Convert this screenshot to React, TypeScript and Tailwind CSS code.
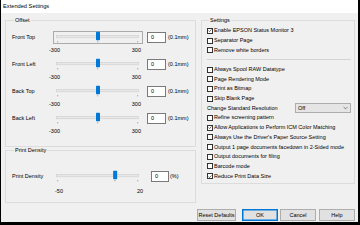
import clsx from 'clsx';

const font = { fontFamily: '"Liberation Sans", Arial, sans-serif' };

const offsets = [
  { label: 'Front Top', focused: true },
  { label: 'Front Left', focused: false },
  { label: 'Back Top', focused: false },
  { label: 'Back Left', focused: false },
];

const settings: { label: string; checked?: boolean; select?: boolean }[] = [
  { label: 'Always Spool RAW Datatype' },
  { label: 'Page Rendering Mode' },
  { label: 'Print as Bitmap' },
  { label: 'Skip Blank Page' },
  { label: 'Change Standard Resolution', select: true },
  { label: 'Refine screening pattern' },
  { label: 'Allow Applications to Perform ICM Color Matching', checked: true },
  { label: "Always Use the Driver's Paper Source Setting" },
  { label: 'Output 1 page documents facedown in 2-Sided mode' },
  { label: 'Output documents for filing' },
  { label: 'Barcode mode' },
  { label: 'Reduce Print Data Size', checked: true },
];

const Slider = ({ min, max, value, focused }: { min: number; max: number; value: number; focused?: boolean }) => {
  const frac = (value - min) / (max - min);
  const zero = (0 - min) / (max - min);
  const thumb = 5 + frac * 80;
  return (
    <svg width="90" height="13" viewBox="0 0 90 13" className="shrink-0">
      {focused && <rect x="0.5" y="0.5" width="89" height="12" fill="none" stroke="#ababab" strokeWidth="1" />}
      <rect x="3.5" y="4.5" width="82" height="2.2" fill="#e7e7e7" stroke="#d4d4d4" strokeWidth="0.8" />
      {[0, zero, 1].map((t, i) => (
        <rect key={i} x={4.3 + t * 80} y="10" width="0.9" height="1.4" fill="#a3a3a3" />
      ))}
      <rect x={thumb - 2} y="0.8" width="4" height="8.4" rx="0.6" fill="#0078d7" />
    </svg>
  );
};

const Check = ({ checked }: { checked?: boolean }) => (
  <span className="mr-[1px] flex h-[6px] w-[6px] shrink-0 items-center justify-center border border-[#333] bg-white">
    {checked && (
      <svg width="5" height="5" viewBox="0 0 5 5">
        <path d="M0.6 2.6 L1.9 3.9 L4.4 1.1" fill="none" stroke="#222" strokeWidth="0.8" />
      </svg>
    )}
  </span>
);

const Row = ({ label, checked }: { label: string; checked?: boolean }) => (
  <div className="flex h-[9.7px] items-center">
    <Check checked={checked} />
    <span className="whitespace-nowrap">{label}</span>
  </div>
);

const Button = ({ label, primary, className }: { label: string; primary?: boolean; className?: string }) => (
  <div
    className={clsx(
      'flex h-[12px] items-center justify-center border bg-[#e1e1e1]',
      primary ? 'border-[#0078d7] shadow-[inset_0_0_0_0.5px_#0078d7]' : 'border-[#adadad]',
      className,
    )}
  >
    {label}
  </div>
);

export default function App() {
  return (
    <div className="h-[225px] w-[360px] bg-black pb-[3px] pl-px pr-[2px] text-[5.5px] leading-[7px] text-black" style={font}>
      <div className="flex h-full flex-col bg-[#f0f0f0]">
        <div className="flex h-[13px] shrink-0 items-center bg-white pl-[2px] text-[5.7px]">Extended Settings</div>

        <div className="flex flex-1 flex-col pl-[4px] pr-[3px]">
          <div className="flex gap-[5px] pt-[4px]">
            <div className="flex w-[191px] flex-col">
              <fieldset className="h-[129.5px] border border-[#dcdcdc] pl-[6px] pt-[6.5px]">
                <legend className="ml-[2px] px-[1px]">Offset</legend>
                {offsets.map((o) => (
                  <div key={o.label} className="flex h-[27.33px] flex-col">
                    <div className="flex h-[13px] items-center">
                      <span className="w-[41px] whitespace-nowrap">{o.label}</span>
                      <Slider min={-300} max={300} value={0} focused={o.focused} />
                      <div className="ml-[4px] flex h-[11px] w-[19px] items-center border border-[#7a7a7a] bg-white pl-[3px]">0</div>
                      <span className="ml-[2px] whitespace-nowrap">(0.1mm)</span>
                    </div>
                    <div className="flex h-[13px] items-center">
                      <div className="w-[37px]" />
                      <div className="flex w-[92px] justify-between">
                        <span>-300</span>
                        <span>300</span>
                      </div>
                    </div>
                  </div>
                ))}
              </fieldset>

              <fieldset className="h-[56.5px] border border-[#dcdcdc] pl-[6px] pt-[16px]">
                <legend className="ml-[2px] px-[1px]">Print Density</legend>
                <div className="flex h-[13px] items-center">
                  <span className="w-[41px] whitespace-nowrap">Print Density</span>
                  <Slider min={-50} max={20} value={0} />
                  <div className="ml-[8px] flex h-[11px] w-[18px] items-center border border-[#7a7a7a] bg-white pl-[3px]">0</div>
                  <span className="ml-[1px]">(%)</span>
                </div>
                <div className="flex h-[17px] items-center">
                  <div className="w-[43px]" />
                  <div className="flex w-[88px] justify-between">
                    <span>-50</span>
                    <span>20</span>
                  </div>
                </div>
              </fieldset>
            </div>

            <fieldset className="h-[167px] w-[154px] border border-[#dcdcdc] pl-[5px] pr-[3px] pt-[2px]">
              <legend className="ml-[2px] px-[1px]">Settings</legend>
              <Row label="Enable EPSON Status Monitor 3" checked />
              <Row label="Separator Page" />
              <Row label="Remove white borders" />
              <div className="flex h-[9.6px] items-center">
                <div className="h-px w-full bg-[#d5d5d5]" />
              </div>
              {settings.map((s) =>
                s.select ? (
                  <div key={s.label} className="flex h-[9.7px] items-center justify-between">
                    <span className="whitespace-nowrap">{s.label}</span>
                    <div className="flex h-[10px] w-[56px] items-center justify-between border border-[#adadad] bg-[#e5e5e5] pl-[2px] pr-[2px]">
                      <span>Off</span>
                      <svg width="5" height="4" viewBox="0 0 5 4">
                        <path d="M0.6 1 L2.5 2.9 L4.4 1" fill="none" stroke="#555" strokeWidth="0.7" />
                      </svg>
                    </div>
                  </div>
                ) : (
                  <Row key={s.label} label={s.label} checked={s.checked} />
                ),
              )}
            </fieldset>
          </div>

          <div className="mb-px mt-auto flex">
            <Button label="Reset Defaults" className="ml-auto w-[39px]" />
            <Button label="OK" primary className="ml-[6px] w-[36px]" />
            <Button label="Cancel" className="ml-[2px] w-[36px]" />
            <Button label="Help" className="ml-[3px] w-[36px]" />
          </div>
        </div>
      </div>
    </div>
  );
}
